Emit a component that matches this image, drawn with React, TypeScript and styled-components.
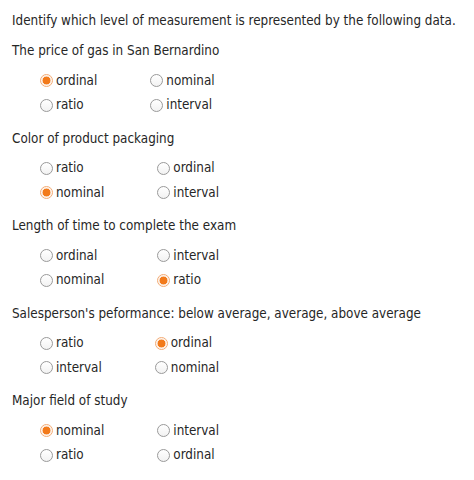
import React, { useState } from "react"
import styled, { createGlobalStyle } from "styled-components"

const GlobalStyle = createGlobalStyle`
  html, body {
    margin: 0;
    padding: 0;
    background: #ffffff;
  }
  body {
    font-family: "DejaVu Sans Condensed", "DejaVu Sans", sans-serif;
    font-size: 13.35px;
    color: #262626;
  }
`

const Page = styled.div`
  padding: 12px 12px 0 12px;
  display: flex;
  flex-direction: column;
`
const Intro = styled.p`
  margin: 0 0 13px;
  line-height: 17px;
  white-space: nowrap;
`
const QuestionBlock = styled.div`
  display: flex;
  flex-direction: column;
  margin-bottom: 15.5px;
`
const QuestionTitle = styled.div`
  line-height: 17px;
  margin-bottom: 12.5px;
`
const OptionsGrid = styled.div`
  display: grid;
  grid-template-columns: max-content max-content;
  column-gap: 53px;
  row-gap: 6.5px;
  padding-left: 28px;
`
const OptionLabel = styled.label`
  display: flex;
  align-items: center;
  gap: 3px;
  line-height: 18px;
  cursor: pointer;
`
const HiddenInput = styled.input`
  display: none;
`
const RadioCircle = styled.span<{ $checked: boolean }>`
  width: 13px;
  height: 13px;
  box-sizing: border-box;
  border-radius: 50%;
  border: 1px solid ${(props) => (props.$checked ? "#f3ab74" : "#9a9a9a")};
  background: ${(props) =>
    props.$checked
      ? "radial-gradient(circle, #f27a1a 0, #f27a1a 3.6px, #fbe3d0 4.2px, #fff 5.5px)"
      : "linear-gradient(#ffffff, #f2f2f2)"};
  flex-shrink: 0;
`

type Question = {
  title: string
  options: string[]
  answer: string
}

const questions: Question[] = [
  {
    title: "The price of gas in San Bernardino",
    options: ["ordinal", "nominal", "ratio", "interval"],
    answer: "ordinal",
  },
  {
    title: "Color of product packaging",
    options: ["ratio", "ordinal", "nominal", "interval"],
    answer: "nominal",
  },
  {
    title: "Length of time to complete the exam",
    options: ["ordinal", "interval", "nominal", "ratio"],
    answer: "ratio",
  },
  {
    title: "Salesperson's peformance: below average, average, above average",
    options: ["ratio", "ordinal", "interval", "nominal"],
    answer: "ordinal",
  },
  {
    title: "Major field of study",
    options: ["nominal", "interval", "ratio", "ordinal"],
    answer: "nominal",
  },
]

const App: React.FC = () => {
  const [answers, setAnswers] = useState<string[]>(questions.map((q) => q.answer))

  const selectHandler = (index: number, value: string) => {
    const next = [...answers]
    next[index] = value
    setAnswers(next)
  }

  return (
    <>
      <GlobalStyle />
      <Page>
        <Intro>Identify which level of measurement is represented by the following data.</Intro>
        {questions.map((question, qIndex) => (
          <QuestionBlock key={question.title}>
            <QuestionTitle>{question.title}</QuestionTitle>
            <OptionsGrid>
              {question.options.map((option) => (
                <OptionLabel key={option}>
                  <HiddenInput
                    type="radio"
                    name={`q${qIndex}`}
                    value={option}
                    checked={answers[qIndex] === option}
                    onChange={() => selectHandler(qIndex, option)}
                  />
                  <RadioCircle $checked={answers[qIndex] === option} />
                  {option}
                </OptionLabel>
              ))}
            </OptionsGrid>
          </QuestionBlock>
        ))}
      </Page>
    </>
  )
}

export default App
